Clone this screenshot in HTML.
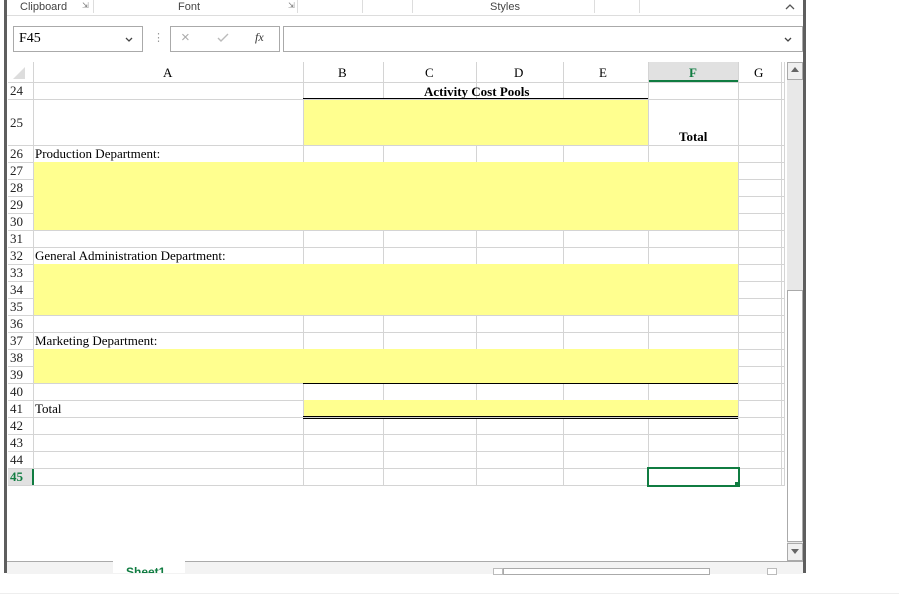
<!DOCTYPE html>
<html><head><meta charset="utf-8"><style>
body{margin:0;width:899px;height:606px;background:#fff;position:relative;overflow:hidden;font-family:"Liberation Serif",serif;}
.a{position:absolute;}
.ui{font-family:"Liberation Sans",sans-serif;font-size:11px;color:#444;}
.h{background:#d4d4d4;}
.v{position:absolute;width:1px;background:#d4d4d4;}
.y{position:absolute;background:#ffff8f;}
.rn{position:absolute;left:10px;width:23px;font-size:13px;color:#222;}
.t{position:absolute;font-size:13px;color:#000;}
</style></head><body>
<div class="a" style="left:4px;top:0;width:3px;height:573px;background:#5e5e5e"></div>
<div class="a" style="left:803px;top:0;width:3px;height:573px;background:#5e5e5e"></div>
<div class="a ui" style="left:20px;top:1px">Clipboard</div>
<div class="a ui" style="left:82px;top:1px;font-size:8px;color:#777">&#8690;</div>
<div class="a ui" style="left:178px;top:1px">Font</div>
<div class="a ui" style="left:288px;top:1px;font-size:8px;color:#777">&#8690;</div>
<div class="a ui" style="left:490px;top:1px">Styles</div>
<div class="a" style="left:93px;top:0;width:1px;height:13px;background:#ddd"></div>
<div class="a" style="left:297px;top:0;width:1px;height:13px;background:#ddd"></div>
<div class="a" style="left:362px;top:0;width:1px;height:13px;background:#ddd"></div>
<div class="a" style="left:412px;top:0;width:1px;height:13px;background:#ddd"></div>
<div class="a" style="left:594px;top:0;width:1px;height:13px;background:#ddd"></div>
<div class="a" style="left:639px;top:0;width:1px;height:13px;background:#ddd"></div>
<div class="a" style="left:7px;top:15px;width:796px;height:1px;background:#ddd"></div>
<svg class="a" style="left:785px;top:4px" width="10" height="6"><path d="M1 5L5 1L9 5" fill="none" stroke="#555" stroke-width="1.3"/></svg>
<div class="a" style="left:13px;top:26px;width:128px;height:24px;border:1px solid #aaa"></div>
<div class="t" style="left:19px;top:31px;font-size:14px">F45</div>
<svg class="a" style="left:125px;top:37px" width="8" height="5"><path d="M1 1L4 4L7 1" fill="none" stroke="#444" stroke-width="1.3"/></svg>
<div class="a ui" style="left:153px;top:31px;color:#999">&#8942;</div>
<div class="a" style="left:170px;top:26px;width:108px;height:24px;border:1px solid #aaa"></div>
<div class="a ui" style="left:181px;top:29px;font-size:15px;color:#aaa">&#215;</div>
<svg class="a" style="left:217px;top:33px" width="12" height="10"><path d="M1 5L4 8L11 1" fill="none" stroke="#bbb" stroke-width="1.4"/></svg>
<div class="t" style="left:255px;top:30px;font-style:italic;font-size:12px;color:#333">fx</div>
<div class="a" style="left:283px;top:26px;width:518px;height:24px;border:1px solid #aaa"></div>
<svg class="a" style="left:784px;top:37px" width="8" height="5"><path d="M1 1L4 4L7 1" fill="none" stroke="#444" stroke-width="1.3"/></svg>
<div class="a" style="left:648px;top:62px;width:90px;height:18px;background:#e1e1e1;border-bottom:2px solid #107c41"></div>
<svg class="a" style="left:12px;top:66px" width="14" height="14"><path d="M13 1L13 13L1 13Z" fill="#ddd"/></svg>
<div class="t" style="left:163px;top:65px">A</div>
<div class="t" style="left:338px;top:65px">B</div>
<div class="t" style="left:425px;top:65px">C</div>
<div class="t" style="left:514px;top:65px">D</div>
<div class="t" style="left:599px;top:65px">E</div>
<div class="t" style="left:689px;top:65px;font-weight:bold;color:#107c41">F</div>
<div class="t" style="left:754px;top:65px">G</div>
<div id="grid"></div>
<div class="y" style="left:304px;top:100px;width:344px;height:45px"></div>
<div class="y" style="left:34px;top:162px;width:704px;height:68px"></div>
<div class="y" style="left:34px;top:264px;width:704px;height:51px"></div>
<div class="y" style="left:34px;top:349px;width:704px;height:34px"></div>
<div class="y" style="left:304px;top:400px;width:434px;height:17px"></div>
<div class="a" style="left:303px;top:98px;width:345px;height:1px;background:#000"></div>
<div class="a" style="left:303px;top:383px;width:435px;height:1px;background:#000"></div>
<div class="a" style="left:303px;top:416px;width:435px;height:1px;background:#000"></div>
<div class="a" style="left:303px;top:418px;width:435px;height:1px;background:#000"></div>
<div class="a" style="left:647px;top:467px;width:89px;height:16px;border:2px solid #107c41"></div>
<div class="a" style="left:735px;top:482px;width:4px;height:4px;background:#107c41"></div>
<div class="a" style="left:8px;top:469px;width:24px;height:16px;background:#e1e1e1;border-right:2px solid #107c41"></div>
<div class="rn" style="top:469px;color:#107c41;font-weight:bold">45</div>
<div class="t" style="left:424px;top:84px;font-weight:bold">Activity Cost Pools</div>
<div class="t" style="left:679px;top:129px;font-weight:bold">Total</div>
<div class="t" style="left:35px;top:146px">Production Department:</div>
<div class="t" style="left:35px;top:248px">General Administration Department:</div>
<div class="t" style="left:35px;top:333px">Marketing Department:</div>
<div class="t" style="left:35px;top:401px">Total</div>
<div class="a" style="left:787px;top:62px;width:16px;height:498px;background:#e8e8e8"></div>
<div class="a" style="left:787px;top:290px;width:14px;height:250px;background:#fff;border:1px solid #aaa"></div>
<div class="a" style="left:787px;top:62px;width:14px;height:16px;background:#f0f0f0;border:1px solid #aaa"></div>
<svg class="a" style="left:791px;top:67px" width="8" height="5"><path d="M0 5L4 0L8 5Z" fill="#666"/></svg>
<div class="a" style="left:787px;top:543px;width:14px;height:16px;background:#f0f0f0;border:1px solid #aaa"></div>
<svg class="a" style="left:791px;top:549px" width="8" height="5"><path d="M0 0L4 5L8 0Z" fill="#666"/></svg>
<div class="a" style="left:7px;top:561px;width:796px;height:12px;background:#f3f3f3;border-top:1px solid #aaa"></div>
<div class="a" style="left:113px;top:561px;width:72px;height:12px;background:#fff"></div>
<div class="a" style="left:126px;top:562px;font-family:'Liberation Sans',sans-serif;font-size:12px;font-weight:bold;color:#107c41;height:11px;overflow:hidden;line-height:20px">Sheet1</div>
<div class="a" style="left:493px;top:568px;width:8px;height:5px;border:1px solid #bbb;background:#fff"></div>
<div class="a" style="left:503px;top:568px;width:205px;height:5px;border:1px solid #aaa;background:#fff"></div>
<div class="a" style="left:767px;top:568px;width:8px;height:5px;border:1px solid #bbb;background:#fff"></div>
<div class="a" style="left:0;top:593px;width:899px;height:1px;background:#eee"></div>
<script>
var g=document.getElementById('grid'),s='';
var cols=[33,303,383,476,563,648,738,781,784];
var rows=[82,99,145,162,179,196,213,230,247,264,281,298,315,332,349,366,383,400,417,434,451,468,485];
for(var i=0;i<rows.length;i++){s+='<div class="a h" style="left:8px;top:'+rows[i]+'px;width:777px;height:1px"></div>';}
for(var j=0;j<cols.length;j++){s+='<div class="v" style="left:'+cols[j]+'px;top:62px;height:423px"></div>';}
for(var k=0;k<21;k++){s+='<div class="rn" style="top:'+(rows[k]+(k==1?16:1))+'px">'+(24+k)+'</div>';}
g.innerHTML=s;
</script>
</body></html>
